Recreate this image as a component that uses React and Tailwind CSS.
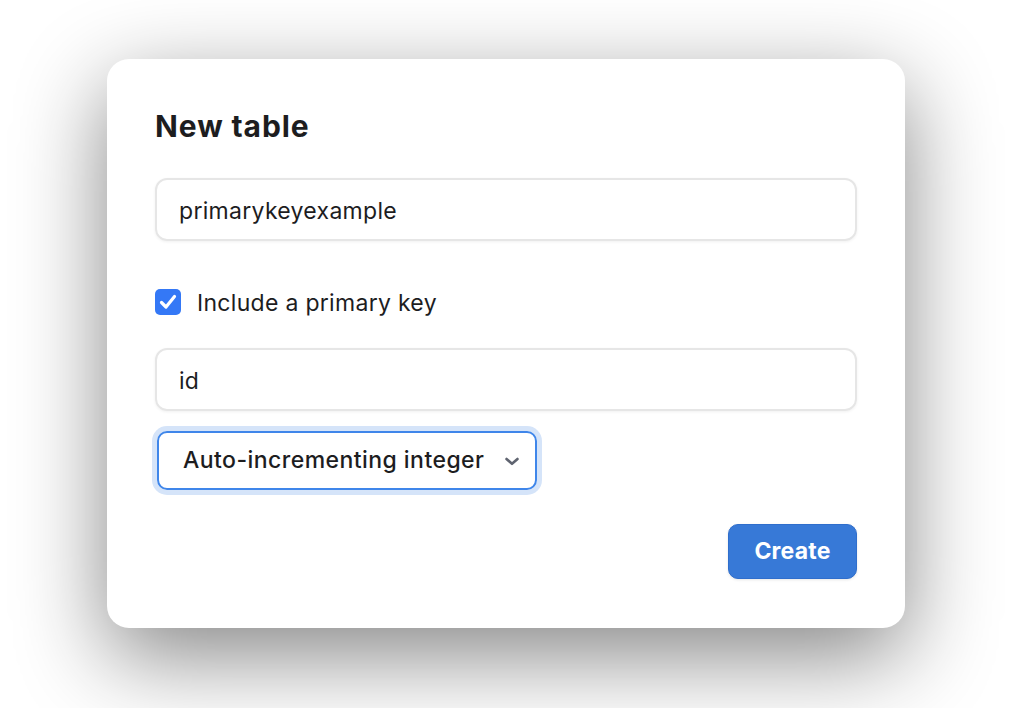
import React from "react";

export default function App() {
  return (
    <div
      className="w-[1024px] h-[708px] bg-white flex items-start pl-[107px] pt-[59px]"
      style={{ fontFamily: "Inter, 'Noto Sans', sans-serif" }}
    >
      <div className="w-[798px] h-[569px] bg-white rounded-[22px] shadow-[0_28px_90px_rgba(0,0,0,0.48)] px-[48px] pt-[48px] flex flex-col">
        <h1 className="text-[30px] leading-[38px] font-bold text-[#1d1d1f] tracking-[0.9px]">
          New table
        </h1>
        <div className="mt-[33px] h-[63px] w-[702px] rounded-[12px] border-2 border-[#e6e6e6] shadow-[0_1px_3px_rgba(0,0,0,0.06)] flex items-center pl-[22px] pt-[3px] text-[23px] tracking-[0.3px] text-[#1d1d1f]">
          primarykeyexample
        </div>
        <div className="mt-[48px] flex items-center h-[26px]">
          <div className="w-[26px] h-[26px] rounded-[5px] bg-[#3478f6] flex items-center justify-center">
            <svg width="22" height="22" viewBox="0 0 22 22" fill="none">
              <path d="M4.5 11.5 L9 16 L17.5 5.5" stroke="white" strokeWidth="3.2" strokeLinecap="round" strokeLinejoin="round" />
            </svg>
          </div>
          <span className="ml-[16px] pt-[3px] text-[23px] tracking-[0.3px] text-[#1d1d1f]">Include a primary key</span>
        </div>
        <div className="mt-[33px] h-[63px] w-[702px] rounded-[12px] border-2 border-[#e6e6e6] shadow-[0_1px_3px_rgba(0,0,0,0.06)] flex items-center pl-[22px] pt-[3px] text-[23px] tracking-[0.3px] text-[#1d1d1f]">
          id
        </div>
        <div className="mt-[20px] ml-[2px] h-[59px] w-[380px] rounded-[10px] border-2 border-[#3f86ea] ring-[5px] ring-[#d5e4f9] flex items-center pl-[24px] pr-[14px] justify-between">
          <span className="text-[23px] font-medium tracking-[0.45px] text-[#1d1d1f]">Auto-incrementing integer</span>
          <svg width="18" height="12" viewBox="0 0 18 12" fill="none">
            <path d="M3.5 4 L9 8.8 L14.5 4" stroke="#5f6470" strokeWidth="2.6" strokeLinecap="round" strokeLinejoin="round" />
          </svg>
        </div>
        <div className="mt-[34px] flex justify-end">
          <button className="w-[129px] h-[55px] rounded-[10px] bg-[#3779d7] border border-[#2f6ecc] text-white text-[23px] tracking-[0.2px] font-bold shadow-[0_1px_3px_rgba(0,0,0,0.1)]">
            Create
          </button>
        </div>
      </div>
    </div>
  );
}
